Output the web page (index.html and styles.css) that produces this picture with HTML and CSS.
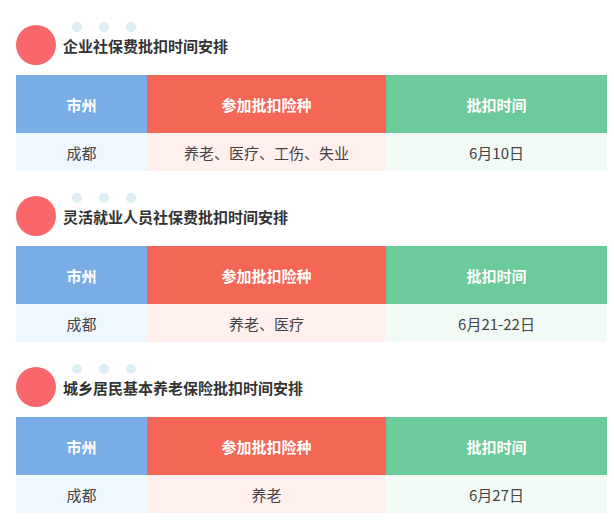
FILE: index.html
```html
<!DOCTYPE html>
<html lang="zh-CN">
<head>
<meta charset="utf-8">
<title>批扣时间安排</title>
<link rel="stylesheet" href="styles.css">
</head>
<body>
<main class="page">
  <section class="block">
    <div class="head">
      <span class="badge"></span>
      <div class="head-text">
        <div class="dots"><i></i><i></i><i></i></div>
        <h2 class="title">企业社保费批扣时间安排</h2>
      </div>
    </div>
    <div class="table">
      <div class="th c1">市州</div>
      <div class="th c2">参加批扣险种</div>
      <div class="th c3">批扣时间</div>
      <div class="td c1">成都</div>
      <div class="td c2">养老、医疗、工伤、失业</div>
      <div class="td c3">6月10日</div>
    </div>
  </section>
  <section class="block">
    <div class="head">
      <span class="badge"></span>
      <div class="head-text">
        <div class="dots"><i></i><i></i><i></i></div>
        <h2 class="title">灵活就业人员社保费批扣时间安排</h2>
      </div>
    </div>
    <div class="table">
      <div class="th c1">市州</div>
      <div class="th c2">参加批扣险种</div>
      <div class="th c3">批扣时间</div>
      <div class="td c1">成都</div>
      <div class="td c2">养老、医疗</div>
      <div class="td c3">6月21-22日</div>
    </div>
  </section>
  <section class="block">
    <div class="head">
      <span class="badge"></span>
      <div class="head-text">
        <div class="dots"><i></i><i></i><i></i></div>
        <h2 class="title">城乡居民基本养老保险批扣时间安排</h2>
      </div>
    </div>
    <div class="table">
      <div class="th c1">市州</div>
      <div class="th c2">参加批扣险种</div>
      <div class="th c3">批扣时间</div>
      <div class="td c1">成都</div>
      <div class="td c2">养老</div>
      <div class="td c3">6月27日</div>
    </div>
  </section>
</main>
</body>
</html>
```

FILE: styles.css
```css
html, body {
  margin: 0;
  padding: 0;
  background: #ffffff;
}

body {
  font-family: "Noto Sans CJK SC", "Noto Sans", sans-serif;
  color: #333333;
}

.page {
  padding: 0 7px 0 16px;
}

.block {
  padding-top: 22px;
}

.head {
  display: flex;
  align-items: flex-start;
  height: 53px;
}

.badge {
  display: block;
  flex: none;
  width: 40px;
  height: 40px;
  margin-top: 3px;
  border-radius: 50%;
  background: #f9676a;
}

.head-text {
  margin-left: 7px;
  display: flex;
  flex-direction: column;
}

.dots {
  display: flex;
  gap: 17px;
  margin-left: 9px;
}

.dots i {
  display: block;
  width: 10px;
  height: 10px;
  border-radius: 50%;
  background: #ddeef4;
}

.title {
  margin: 4px 0 0;
  font-size: 15px;
  line-height: 20px;
  font-weight: 700;
  color: #333333;
}

.table {
  display: grid;
  grid-template-columns: 131px 239px 221px;
  grid-template-rows: 58px 38px;
}

.th, .td {
  display: flex;
  align-items: center;
  justify-content: center;
  font-size: 15px;
}

.th {
  color: #ffffff;
  font-weight: 700;
}

.td {
  color: #444444;
}

.th.c1 { background: #7aade6; }
.th.c2 { background: #f46655; }
.th.c3 { background: #6dca9a; }

.td.c1 { background: #eff7ff; }
.td.c2 { background: #fff0ee; }
.td.c3 { background: #f2faf5; }
```
